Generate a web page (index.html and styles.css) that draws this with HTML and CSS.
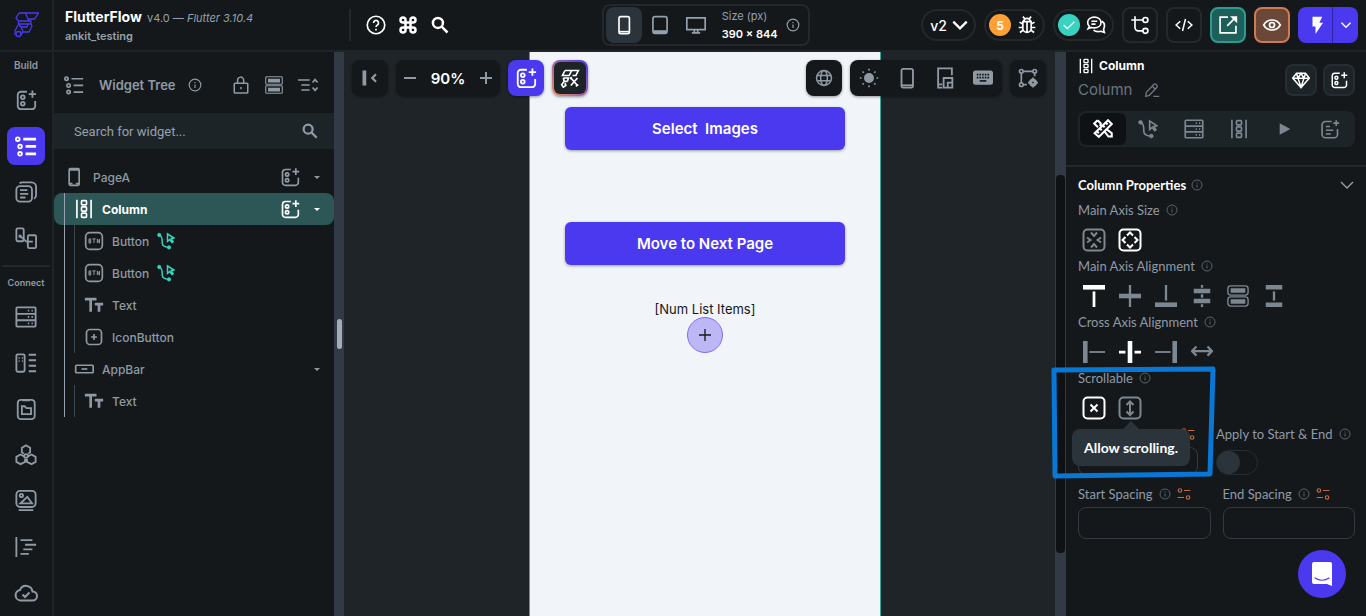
FILE: index.html
```html
<!DOCTYPE html>
<html lang="en">
<head>
    <meta charset="UTF-8">
    <meta name="viewport" content="width=device-width, initial-scale=1.0">
    <title>FlutterFlow - ankit_testing</title>
    <link rel="stylesheet" href="styles.css">
</head>
<body>
    <!-- Shared icons -->
    <svg class="sprite" aria-hidden="true">
        <symbol id="i-logo" viewBox="0 0 26 26"><path d="M6 1h19.500L21.500 7H15L12.500 1M6 1L3 6l2.500 3H15l1-2M5.500 9v3H18V9h-3M5.500 12L8 15h6l1-3M18 12l1 2-3 6h-6L8 15M5 13l-3 6v4M10 20l-3 4"/><circle cx="5.500" cy="22" r="2.500"/></symbol>
        <symbol id="i-add" viewBox="0 0 24 24"><path d="M13 3H6.500A3.500 3.500 0 0 0 3 6.500v12A3.500 3.500 0 0 0 6.500 22h12a3.500 3.500 0 0 0 3.500-3.500V13M19 1.500v8M15 5.500h8"/><circle cx="8.500" cy="9" r="2"/><circle cx="8.500" cy="16" r="2"/></symbol>
        <symbol id="i-tree" viewBox="0 0 24 24"><circle cx="3" cy="4.500" r="2" stroke-width="2"/><circle cx="5.500" cy="12.500" r="2" stroke-width="2"/><circle cx="5.500" cy="20.500" r="2" stroke-width="2"/><path d="M9 4.500h14M11.500 12.500H23M11.500 20.500H23"/></symbol>
        <symbol id="i-pages" viewBox="0 0 24 24"><rect x="1.500" y="5.500" width="17" height="17" rx="4"/><path d="M5 2.500c1-1 2-1 3-1h10a5 5 0 0 1 5 5v9c0 2-1 3-2 4M5.500 10h8M5.500 14h9M5.500 18h6"/></symbol>
        <symbol id="i-flow" viewBox="0 0 24 24"><rect x="1.500" y="1.500" width="8" height="14" rx="1.500"/><rect x="14" y="9" width="9" height="14" rx="1.500"/><path d="M5.500 10l7 6h7"/><circle cx="5.500" cy="10" r=".8"/></symbol>
        <symbol id="i-db" viewBox="0 0 24 24"><rect x="1.500" y="1.500" width="21" height="21" rx="1"/><path d="M1.500 8.500h21M1.500 15.500h21M14 5h1.500M18 5h1.500M14 12h1.500M18 12h1.500M14 19h1.500M18 19h1.500"/></symbol>
        <symbol id="i-types" viewBox="0 0 24 24"><rect x="1.500" y="2.500" width="9" height="19" rx="1.500"/><path d="M4 6.500h1M7.500 6.500h1M4 10h1M7.500 10h1M15 3h8M15 9h8M15 15h8M15 21h8"/></symbol>
        <symbol id="i-files" viewBox="0 0 24 24"><rect x="3" y="2" width="18.500" height="21" rx="3.500"/><path d="M8 2.500h8M7.500 9v8.500h10V11h-5l-2-2z"/></symbol>
        <symbol id="i-api" viewBox="0 0 24 24"><path d="M9.500 10.500L7.500 9V4L12 1.500 16.500 4v5l-2 1.500M10 13.500l-4-2-4.500 2.500v5.500L6 22l5-2.500V16M14 13.500l4-2 4.500 2.500v5.500L18 22l-5-2.500V16"/><circle cx="12" cy="13" r="2"/></symbol>
        <symbol id="i-media" viewBox="0 0 24 24"><rect x="1.500" y="1" width="21" height="17.500" rx="4"/><circle cx="7" cy="6" r="1.800"/><path d="M6 14.500l7.500-7 5 7zM4 22h16"/></symbol>
        <symbol id="i-settings" viewBox="0 0 24 24"><path d="M1.500 1v22M6 4.500h13M11 9.500h12M9 14.500h10M6 19.500h9"/></symbol>
        <symbol id="i-cloud" viewBox="0 0 24 24"><path d="M6.500 19.500a5.300 5.300 0 0 1-.5-10.500 6.500 6.500 0 0 1 12.500 1.500 4.500 4.500 0 0 1 0 9zM8.500 13.500l2.500 2.500 4.500-4.500"/></symbol>
        <symbol id="i-info" viewBox="0 0 24 24"><circle cx="12" cy="12" r="10"/><path d="M12 11v6M12 7v2"/></symbol>
        <symbol id="i-lock" viewBox="0 0 24 24"><rect x="3" y="9.500" width="18" height="13" rx="1"/><path d="M7.500 9.500V6a4 4 0 0 1 8-1v4.500M12 14.500v3"/></symbol>
        <symbol id="i-rows" viewBox="0 0 24 24"><rect x="1" y="1" width="22" height="10" rx="1" stroke-width="1.500"/><rect x="1" y="13" width="22" height="10" rx="1" stroke-width="1.500"/><path d="M4 6h16M4 18h16" stroke-width="5"/></symbol>
        <symbol id="i-collapse" viewBox="0 0 24 24"><path d="M0 6h14M4 12h10M4 18h10M17.500 9l3-3.500 3 3.500M17.500 15l3 3.500 3-3.500"/></symbol>
        <symbol id="i-search" viewBox="0 0 24 24"><circle cx="9.500" cy="9.500" r="6"/><path d="M14 14l7 7"/></symbol>
        <symbol id="i-phone" viewBox="0 0 24 24"><rect x="6" y="2" width="12.500" height="20.500" rx="2"/><path d="M6 20h12.500"/></symbol>
        <symbol id="i-page" viewBox="0 0 24 24"><rect x="5" y="2" width="12" height="20" rx="1.500"/><path d="M5 3.500h12M5 20h4M13 20h4"/></symbol>
        <symbol id="i-column" viewBox="0 0 24 24"><path d="M3.500 1v22M20.500 1v22"/><rect x="9" y="2" width="6" height="5" rx="1"/><rect x="9" y="9.500" width="6" height="5" rx="1"/><rect x="9" y="17" width="6" height="5" rx="1"/></symbol>
        <symbol id="i-btn" viewBox="0 0 24 24"><rect x="2" y="2" width="20" height="20" rx="5"/><path d="M6 9.500v5h2v-5zM6 12h2M10 9.500h4M12 9.500v5M16 14.500v-5l2.500 5v-5" stroke-width="1.200"/></symbol>
        <symbol id="i-action" viewBox="0 0 24 24"><circle cx="3" cy="4" r="2.200" fill="currentColor" stroke-width="1"/><circle cx="16" cy="20.500" r="2.200" fill="currentColor" stroke-width="1"/><path d="M3 4.500c5 1 3.500 6 4 10.500.2 3 2 5 8 5.500M14 2.500v10l3-2.500 3 4 1.500-1-2.500-4 3.500-1z"/></symbol>
        <symbol id="i-text" viewBox="0 0 24 24"><path d="M1 5h14M8 5v15M13 11h10M18 11v9" stroke-width="3.200"/></symbol>
        <symbol id="i-iconbtn" viewBox="0 0 24 24"><rect x="3" y="3" width="18" height="18" rx="4"/><path d="M12 8.500v7M8.500 12h7"/></symbol>
        <symbol id="i-appbar" viewBox="0 0 24 24"><rect x="2" y="7.500" width="21" height="9" rx="1"/><path d="M9 12h7"/></symbol>
        <symbol id="i-help" viewBox="0 0 24 24"><circle cx="12" cy="12" r="10.500"/><path d="M9 9.500a3 3 0 1 1 4.500 2.600c-1 .7-1.500 1.200-1.500 2.400M12 16.500v2"/></symbol>
        <symbol id="i-cmd" viewBox="0 0 24 24"><path d="M9 9h6v6H9zM9 9H6a3 3 0 1 1 3-3zM15 9V6a3 3 0 1 1 3 3zM15 15h3a3 3 0 1 1-3 3zM9 15v3a3 3 0 1 1-3-3z"/></symbol>
        <symbol id="i-tablet" viewBox="0 0 24 24"><rect x="3.500" y="2" width="17" height="20" rx="2.500"/><path d="M4 20h16" stroke-width="3.500"/></symbol>
        <symbol id="i-desktop" viewBox="0 0 24 24"><path d="M1 3.500h22v14H1zM10 18v3M14 18v3M7 21.500h10"/></symbol>
        <symbol id="i-chevron" viewBox="0 0 24 24"><path d="M3 7.500l9 9 9-9"/></symbol>
        <symbol id="i-bug" viewBox="0 0 24 24"><path d="M7 8h10v8a5 5 0 0 1-10 0zM8 8a4 4 0 0 1 8 0M12 8v13M9 4L7 2M15 4l2-2M7 11L3 8.500M7 15H2M7.500 18L3.500 21M17 11l4-2.500M17 15h5M16.500 18l4 3"/></symbol>
        <symbol id="i-comment" viewBox="0 0 24 24"><path d="M2.500 16.500L4 13.500A6 6 0 0 1 2 9c0-4 3.500-6.500 8-6.500S18 5 18 9s-3.500 6.500-8 6.500c-1.500 0-2.500-.2-3.500-.5zM19 7.500c3 1.500 3.500 4 3 6.500-.2 1.500-.5 2.500-1 3.500l1 3.500-4-1.500c-4 1-7 .5-9-1.500M6.500 7.500h7M6.500 11h5"/></symbol>
        <symbol id="i-branch" viewBox="0 0 24 24"><path d="M1.500 6h14M6 1.500V15a4 4 0 0 0 4 4h5.500"/><circle cx="18.500" cy="6" r="3"/><circle cx="18.500" cy="19" r="3"/></symbol>
        <symbol id="i-code" viewBox="0 0 24 24"><path d="M7 7l-5.500 5L7 17M17 7l5.500 5-5.500 5M14 4l-4 16"/></symbol>
        <symbol id="i-open" viewBox="0 0 24 24"><path d="M12 2.500H2.500v19H21.500V13M11 13l9-9"/><path d="M14.500 1.500H23V10z" fill="currentColor" stroke="none"/></symbol>
        <symbol id="i-eye" viewBox="0 0 24 24"><path d="M2 12c4.500-8 15.500-8 20 0-4.500 8-15.500 8-20 0z"/><circle cx="12" cy="12" r="3"/></symbol>
        <symbol id="i-bolt" viewBox="0 0 24 24"><path d="M6 1h13l-4 8h5L10 24V14H6z" fill="currentColor" stroke="none"/></symbol>
        <symbol id="i-side" viewBox="0 0 24 24"><path d="M4.500 2v20" stroke-width="5"/><path d="M20 7l-5 5 5 5"/></symbol>
        <symbol id="i-minus" viewBox="0 0 24 24"><path d="M3 12h18"/></symbol>
        <symbol id="i-plus" viewBox="0 0 24 24"><path d="M3 12h18M12 3v18"/></symbol>
        <symbol id="i-flowx" viewBox="0 0 24 24"><path d="M6 3h16l-3 6h-4M6 3L3 9h8l3-6M4 12h6l-1 4M4 12l1 4h4M5 16l-3 4 2 3 3-2-1-3M13 12l8 9M21 12l-8 9M12 13l2-2M19 22l3-2"/></symbol>
        <symbol id="i-globe" viewBox="0 0 24 24"><circle cx="12" cy="12" r="10"/><ellipse cx="12" cy="12" rx="4.500" ry="10"/><path d="M3 8.500h18M3 15.500h18"/></symbol>
        <symbol id="i-sun" viewBox="0 0 24 24"><circle cx="12" cy="12" r="5" fill="currentColor"/><path d="M12 1v2M12 21v2M1 12h2M21 12h2M4.200 4.200l1.500 1.500M18.300 18.300l1.500 1.500M4.200 19.800l1.500-1.500M18.300 5.700l1.500-1.500"/></symbol>
        <symbol id="i-multi" viewBox="0 0 24 24"><path d="M9 22.500H4.500v-21h15V9M10.500 22.500V12H20v10.500zM15 22v-5h5M9 19H5"/></symbol>
        <symbol id="i-keyboard" viewBox="0 0 24 24"><rect x="1" y="4" width="22" height="15" rx="2" fill="currentColor"/><path d="M4.500 8h15M4.500 11.500h15" stroke="#14181b" stroke-dasharray="2 1.200"/><path d="M8 15.500h8" stroke="#14181b"/></symbol>
        <symbol id="i-bounds" viewBox="0 0 24 24"><circle cx="4" cy="4" r="2.200"/><circle cx="20" cy="4" r="2.200"/><circle cx="4" cy="20" r="2.200"/><path d="M6.500 4h11M4 6.500v11M6.500 20h4M20 6.500V10"/><circle cx="18" cy="17.500" r="3" stroke-width="4"/><path d="M18 11.500v2M18 21.500v2M12 17.500h2M22 17.500h2"/></symbol>
        <symbol id="i-gem" viewBox="0 0 24 24"><path d="M6 3h12l5 6.500L12 22 1 9.500zM1.500 9.500h21M8 9.500l4 12 4-12M6 3l2 6.500L12 3l4 6.500L18 3"/></symbol>
        <symbol id="i-pencil" viewBox="0 0 24 24"><path d="M2.500 21.500l1-6L15 3.500c2-2 6.500 2 4.500 4.500L8 20zM12.500 6.500l4.500 4.500M14 21.500h9"/></symbol>
        <symbol id="i-design" viewBox="0 0 24 24"><path d="M5.500 1.500L10 6M14 15l4.500 6h4v-4l-6-4.500M5.500 1.500l-4 4L6 10M10 6L8 8M18 1.500L22.500 6 7 21.500 2 17zM15.500 4.500l2 2M12 8l2 2M8.500 11.500l2 2M5 15l2 2" stroke-width="2.500"/></symbol>
        <symbol id="i-play" viewBox="0 0 24 24"><path d="M4 3.500l16 8.500-16 8.500z" fill="currentColor" stroke="none"/></symbol>
        <symbol id="i-note" viewBox="0 0 24 24"><path d="M14 3H6.500A4 4 0 0 0 2.500 7v11.500a4 4 0 0 0 4 4H17a4 4 0 0 0 4-4V12M19.500 1.500v7M16 5h7M7 9h5M7 13.500h9M7 18h6"/></symbol>
        <symbol id="i-min" viewBox="0 0 24 24"><rect x="1.500" y="1.500" width="21" height="21" rx="4"/><path d="M9 4.500l3 3.500 3-3.500M9 19.500l3-3.500 3 3.500M5 9.500L8.500 12 5 14.500M19 9.500L15.500 12l3.500 2.500"/></symbol>
        <symbol id="i-max" viewBox="0 0 24 24"><rect x="1.500" y="1.500" width="21" height="21" rx="4"/><path d="M9 7.500L12 4.500l3 3M9 16.500l3 3 3-3M7.500 9l-3 3 3 3M16.500 9l3 3-3 3"/></symbol>
        <symbol id="i-m-start" viewBox="0 0 24 24"><path d="M0 2.500h24" stroke-width="5"/><path d="M12 7v17" stroke-width="3"/></symbol>
        <symbol id="i-m-center" viewBox="0 0 24 24"><path d="M0 12h24" stroke-width="5"/><path d="M12 0v24" stroke-width="2.500"/></symbol>
        <symbol id="i-m-end" viewBox="0 0 24 24"><path d="M0 21.500h24" stroke-width="5"/><path d="M12 0v17" stroke-width="2.500"/></symbol>
        <symbol id="i-m-between" viewBox="0 0 24 24"><path d="M3 6.500h18M3 17.500h18" stroke-width="5"/><path d="M12 0v3M12 10v4M12 21v3" stroke-width="2.500"/></symbol>
        <symbol id="i-m-around" viewBox="0 0 24 24"><rect x="1" y="1" width="22" height="10" rx="3" stroke-width="1.500"/><rect x="1" y="13" width="22" height="10" rx="3" stroke-width="1.500"/><path d="M4 6h16M4 18h16" stroke-width="5"/></symbol>
        <symbol id="i-m-even" viewBox="0 0 24 24"><path d="M3 2.500h18M3 21.500h18" stroke-width="5"/><path d="M12 7v10" stroke-width="2.500"/></symbol>
        <symbol id="i-c-start" viewBox="0 0 24 24"><path d="M2.500 0v24" stroke-width="5"/><path d="M7 12h17"/></symbol>
        <symbol id="i-c-center" viewBox="0 0 24 24"><path d="M12 0v24" stroke-width="5"/><path d="M0 12h7M17 12h7" stroke-width="3"/></symbol>
        <symbol id="i-c-end" viewBox="0 0 24 24"><path d="M21.500 0v24" stroke-width="5"/><path d="M0 12h17"/></symbol>
        <symbol id="i-c-stretch" viewBox="0 0 24 24"><path d="M1.500 11h21M6 6l-5 5 5 5M18 6l5 5-5 5" stroke-width="2.500"/></symbol>
        <symbol id="i-noscroll" viewBox="0 0 24 24"><rect x="1.500" y="1.500" width="21" height="21" rx="4"/><path d="M8.500 8.500l7 7M15.500 8.500l-7 7"/></symbol>
        <symbol id="i-scroll" viewBox="0 0 24 24"><rect x="1.500" y="1.500" width="21" height="21" rx="4"/><path d="M12 5.500v13M8.500 9L12 5.500 15.500 9M8.500 15.500l3.500 3.500 3.500-3.500"/></symbol>
        <symbol id="i-var" viewBox="0 0 24 24"><circle cx="5" cy="6" r="3"/><circle cx="19" cy="18" r="3"/><path d="M12 6h11M1 18h11"/></symbol>
    </svg>

    <header class="header">
        <a class="logo" href="#" aria-label="FlutterFlow home"><svg class="icon s26"><use href="#i-logo"/></svg></a>
        <div class="brand">
            <div class="brand-line"><strong>FlutterFlow</strong> <span>v4.0 — <em>Flutter 3.10.4</em></span></div>
            <div class="project">ankit_testing</div>
        </div>
        <div class="tools">
            <button aria-label="Help"><svg class="icon s20"><use href="#i-help"/></svg></button>
            <button aria-label="Shortcuts"><svg class="icon s20 bold"><use href="#i-cmd"/></svg></button>
            <button aria-label="Search"><svg class="icon s20 bold"><use href="#i-search"/></svg></button>
        </div>
        <div class="devices">
            <button class="active" aria-label="Phone"><svg class="icon s20"><use href="#i-phone"/></svg></button>
            <button aria-label="Tablet"><svg class="icon s20"><use href="#i-tablet"/></svg></button>
            <button aria-label="Desktop"><svg class="icon s20"><use href="#i-desktop"/></svg></button>
            <div class="size"><span>Size (px)</span><b>390 × 844</b></div>
            <svg class="icon s14 muted"><use href="#i-info"/></svg>
        </div>
        <div class="actions">
            <button class="pill version">v2 <svg class="icon s18 bold"><use href="#i-chevron"/></svg></button>
            <button class="pill" aria-label="5 issues"><span class="count">5</span><svg class="icon s20"><use href="#i-bug"/></svg></button>
            <button class="pill" aria-label="Comments"><span class="check"><svg class="icon s16" viewBox="0 0 24 24"><path d="M4 12l5.500 5.500L20 7"/></svg></span><svg class="icon s20"><use href="#i-comment"/></svg></button>
            <button class="square" aria-label="Branches"><svg class="icon s20"><use href="#i-branch"/></svg></button>
            <button class="square" aria-label="Code"><svg class="icon s18"><use href="#i-code"/></svg></button>
            <button class="square share" aria-label="Open"><svg class="icon s20"><use href="#i-open"/></svg></button>
            <button class="square preview" aria-label="Preview"><svg class="icon s20"><use href="#i-eye"/></svg></button>
            <div class="run">
                <button aria-label="Run"><svg class="icon s18"><use href="#i-bolt"/></svg></button>
                <button aria-label="Run options"><svg class="icon s12 bold"><use href="#i-chevron"/></svg></button>
            </div>
        </div>
    </header>

    <div class="workspace">
        <nav class="rail">
            <h2>Build</h2>
            <a href="#" aria-label="Add widget"><svg class="icon s22"><use href="#i-add"/></svg></a>
            <a href="#" class="active" aria-label="Widget tree"><svg class="icon s22 bold"><use href="#i-tree"/></svg></a>
            <a href="#" aria-label="Pages"><svg class="icon s22"><use href="#i-pages"/></svg></a>
            <a href="#" aria-label="Storyboard"><svg class="icon s22"><use href="#i-flow"/></svg></a>
            <h2 class="split">Connect</h2>
            <a href="#" aria-label="Firestore"><svg class="icon s22"><use href="#i-db"/></svg></a>
            <a href="#" aria-label="Data types"><svg class="icon s22"><use href="#i-types"/></svg></a>
            <a href="#" aria-label="App state"><svg class="icon s22"><use href="#i-files"/></svg></a>
            <a href="#" aria-label="API calls"><svg class="icon s22"><use href="#i-api"/></svg></a>
            <a href="#" aria-label="Media"><svg class="icon s22"><use href="#i-media"/></svg></a>
            <a href="#" aria-label="Settings"><svg class="icon s22"><use href="#i-settings"/></svg></a>
            <a href="#" aria-label="Deploy"><svg class="icon s24"><use href="#i-cloud"/></svg></a>
        </nav>

        <aside class="tree">
            <div class="tree-head">
                <svg class="icon s20"><use href="#i-tree"/></svg>
                <h1>Widget Tree</h1>
                <svg class="icon s14"><use href="#i-info"/></svg>
                <div class="tree-tools">
                    <button aria-label="Lock"><svg class="icon s18"><use href="#i-lock"/></svg></button>
                    <button aria-label="Row height"><svg class="icon s18"><use href="#i-rows"/></svg></button>
                    <button aria-label="Collapse"><svg class="icon s20"><use href="#i-collapse"/></svg></button>
                </div>
            </div>
            <div class="search">
                <input type="text" aria-label="Search for widget" placeholder="Search for widget...">
                <button aria-label="Search"><svg class="icon s18 bold"><use href="#i-search"/></svg></button>
            </div>
            <ul class="nodes">
                <li>
                    <div class="node l0"><svg class="icon s20"><use href="#i-page"/></svg><span>PageA</span><button class="add" aria-label="Add child"><svg class="icon s20"><use href="#i-add"/></svg></button><button class="caret" aria-label="Toggle"></button></div>
                    <ul class="guide">
                        <li>
                            <div class="node l1 selected"><svg class="icon s20"><use href="#i-column"/></svg><span>Column</span><button class="add" aria-label="Add child"><svg class="icon s20"><use href="#i-add"/></svg></button><button class="caret" aria-label="Toggle"></button></div>
                            <ul class="guide inner">
                                <li class="node l2"><svg class="icon s20"><use href="#i-btn"/></svg><span>Button</span><svg class="icon s18 teal"><use href="#i-action"/></svg></li>
                                <li class="node l2"><svg class="icon s20"><use href="#i-btn"/></svg><span>Button</span><svg class="icon s18 teal"><use href="#i-action"/></svg></li>
                                <li class="node l2"><svg class="icon s20"><use href="#i-text"/></svg><span>Text</span></li>
                                <li class="node l2"><svg class="icon s20"><use href="#i-iconbtn"/></svg><span>IconButton</span></li>
                            </ul>
                        </li>
                        <li>
                            <div class="node l1"><svg class="icon s20"><use href="#i-appbar"/></svg><span>AppBar</span><button class="caret" aria-label="Toggle"></button></div>
                            <ul class="guide inner">
                                <li class="node l2"><svg class="icon s20"><use href="#i-text"/></svg><span>Text</span></li>
                            </ul>
                        </li>
                    </ul>
                </li>
            </ul>
        </aside>
        <div class="gutter"><span></span></div>

        <main class="canvas">
            <div class="toolbar">
                <button class="tool" aria-label="Hide panel"><svg class="icon s18 bold"><use href="#i-side"/></svg></button>
                <div class="tool zoom">
                    <button aria-label="Zoom out"><svg class="icon s16 bold"><use href="#i-minus"/></svg></button>
                    <b>90%</b>
                    <button aria-label="Zoom in"><svg class="icon s16 bold"><use href="#i-plus"/></svg></button>
                </div>
                <button class="tool primary" aria-label="Add widget"><svg class="icon s22"><use href="#i-add"/></svg></button>
                <button class="tool ai" aria-label="AI generate"><svg class="icon s20"><use href="#i-flowx"/></svg></button>
                <button class="tool push" aria-label="Language"><svg class="icon s18"><use href="#i-globe"/></svg></button>
                <div class="tool group">
                    <button aria-label="Light mode"><svg class="icon s20"><use href="#i-sun"/></svg></button>
                    <button aria-label="Device frame"><svg class="icon s22"><use href="#i-phone"/></svg></button>
                    <button aria-label="Multiple devices"><svg class="icon s22"><use href="#i-multi"/></svg></button>
                    <button aria-label="Keyboard"><svg class="icon s20"><use href="#i-keyboard"/></svg></button>
                </div>
                <button class="tool" aria-label="Canvas settings"><svg class="icon s20"><use href="#i-bounds"/></svg></button>
            </div>
            <div class="phone">
                <button class="app-button">Select&nbsp; Images</button>
                <button class="app-button">Move to Next Page</button>
                <p>[Num List Items]</p>
                <button class="app-add" aria-label="Add item"><svg class="icon s16"><use href="#i-plus"/></svg></button>
            </div>
            <div class="scrollbar"><span></span></div>
        </main>

        <aside class="props">
            <div class="props-head">
                <div class="props-name">
                    <div class="type"><svg class="icon s16"><use href="#i-column"/></svg>Column</div>
                    <div class="alias">Column <svg class="icon s16"><use href="#i-pencil"/></svg></div>
                </div>
                <button aria-label="Theme"><svg class="icon s18"><use href="#i-gem"/></svg></button>
                <button aria-label="Wrap widget"><svg class="icon s18"><use href="#i-add"/></svg></button>
            </div>
            <div class="tabs">
                <button class="active" aria-label="Properties"><svg class="icon s20"><use href="#i-design"/></svg></button>
                <button aria-label="Actions"><svg class="icon s20"><use href="#i-action"/></svg></button>
                <button aria-label="Backend"><svg class="icon s20"><use href="#i-db"/></svg></button>
                <button aria-label="Children"><svg class="icon s20"><use href="#i-column"/></svg></button>
                <button aria-label="Animations"><svg class="icon s16"><use href="#i-play"/></svg></button>
                <button aria-label="Notes"><svg class="icon s20"><use href="#i-note"/></svg></button>
            </div>

            <section class="fields">
                <h2>Column Properties <svg class="icon s12 dim"><use href="#i-info"/></svg><svg class="icon s16 open"><use href="#i-chevron"/></svg></h2>
                <div class="field">
                    <div class="label">Main Axis Size <svg class="icon s12 dim"><use href="#i-info"/></svg></div>
                    <div class="options">
                        <button aria-label="Min"><svg class="icon s24"><use href="#i-min"/></svg></button>
                        <button class="on" aria-label="Max"><svg class="icon s24"><use href="#i-max"/></svg></button>
                    </div>
                </div>
                <div class="field">
                    <div class="label">Main Axis Alignment <svg class="icon s12 dim"><use href="#i-info"/></svg></div>
                    <div class="options">
                        <button class="on" aria-label="Start"><svg class="icon s22"><use href="#i-m-start"/></svg></button>
                        <button aria-label="Center"><svg class="icon s22"><use href="#i-m-center"/></svg></button>
                        <button aria-label="End"><svg class="icon s22"><use href="#i-m-end"/></svg></button>
                        <button aria-label="Space evenly"><svg class="icon s22"><use href="#i-m-between"/></svg></button>
                        <button aria-label="Space around"><svg class="icon s22"><use href="#i-m-around"/></svg></button>
                        <button aria-label="Space between"><svg class="icon s22"><use href="#i-m-even"/></svg></button>
                    </div>
                </div>
                <div class="field">
                    <div class="label">Cross Axis Alignment <svg class="icon s12 dim"><use href="#i-info"/></svg></div>
                    <div class="options">
                        <button aria-label="Start"><svg class="icon s22"><use href="#i-c-start"/></svg></button>
                        <button class="on" aria-label="Center"><svg class="icon s22"><use href="#i-c-center"/></svg></button>
                        <button aria-label="End"><svg class="icon s22"><use href="#i-c-end"/></svg></button>
                        <button aria-label="Stretch"><svg class="icon s22"><use href="#i-c-stretch"/></svg></button>
                    </div>
                </div>
                <div class="field scrollable">
                    <div class="label">Scrollable <svg class="icon s12 dim"><use href="#i-info"/></svg></div>
                    <div class="options">
                        <button class="on" aria-label="Not scrollable"><svg class="icon s24"><use href="#i-noscroll"/></svg></button>
                        <button aria-label="Scrollable" aria-describedby="scroll-tip"><svg class="icon s24"><use href="#i-scroll"/></svg></button>
                    </div>
                    <div class="tooltip" id="scroll-tip" role="tooltip">Allow scrolling.</div>
                    <svg class="callout" viewBox="0 0 166 116" aria-hidden="true"><path d="M4 5L163 4L160 109L5 111Z"/></svg>
                </div>
                <div class="spacing-row">
                    <div class="items">
                        <label class="label" for="items-spacing"><svg class="icon s14 orange"><use href="#i-var"/></svg></label>
                        <input type="text" id="items-spacing" aria-label="Items spacing">
                    </div>
                    <div class="apply">
                        <label class="label" for="apply">Apply to Start &amp; End <svg class="icon s12 dim"><use href="#i-info"/></svg></label>
                        <input type="checkbox" class="switch" id="apply">
                    </div>
                </div>
                <div class="spacing-pair">
                    <div>
                        <label class="label" for="start-spacing">Start Spacing <svg class="icon s12 dim"><use href="#i-info"/></svg><svg class="icon s14 orange"><use href="#i-var"/></svg></label>
                        <input type="text" id="start-spacing">
                    </div>
                    <div>
                        <label class="label" for="end-spacing">End Spacing <svg class="icon s12 dim"><use href="#i-info"/></svg><svg class="icon s14 orange"><use href="#i-var"/></svg></label>
                        <input type="text" id="end-spacing">
                    </div>
                </div>
            </section>
        </aside>
    </div>

    <button class="chat" aria-label="Open chat">
        <svg viewBox="0 0 24 28"><path d="M4 2h16a2 2 0 0 1 2 2v22l-5-2H4a2 2 0 0 1-2-2V4a2 2 0 0 1 2-2z" fill="#fff"/><path d="M5 18c4 3 10 3 14 0" fill="none" stroke="#4b39ef" stroke-width="1.200" stroke-linecap="round"/></svg>
    </button>
</body>
</html>
```
FILE: styles.css
```css
* {
    box-sizing: border-box;
}
body {
    margin: 0;
    height: 100vh;
    display: flex;
    flex-direction: column;
    overflow: hidden;
    background: #14181b;
    color: #8f9aa5;
    font-family: Inter, "Liberation Sans", sans-serif;
    font-size: 12px;
}
h1, h2, p, ul {
    margin: 0;
    padding: 0;
}
ul {
    list-style: none;
}
button {
    display: flex;
    align-items: center;
    justify-content: center;
    padding: 0;
    border: none;
    background: none;
    color: inherit;
    font: inherit;
    cursor: pointer;
}
a {
    color: inherit;
}

/* icons */
.sprite {
    position: absolute;
    width: 0;
    height: 0;
}
.icon {
    flex: none;
    fill: none;
    stroke: currentColor;
    stroke-width: 2;
}
.bold { stroke-width: 3; }
.s12 { width: 12px; height: 12px; }
.s14 { width: 14px; height: 14px; }
.s16 { width: 16px; height: 16px; }
.s18 { width: 18px; height: 18px; }
.s20 { width: 20px; height: 20px; }
.s22 { width: 22px; height: 22px; }
.s24 { width: 24px; height: 24px; }
.s26 { width: 26px; height: 26px; }
.muted { color: #95a1ac; }
.dim { color: #57636c; }
.teal { color: #39d2c0; }
.orange { color: #c46a43; }

/* header */
.header {
    flex: none;
    display: flex;
    align-items: center;
    height: 52px;
    padding-right: 8px;
    border-bottom: 2px solid #1f2428;
    color: #fff;
}
.logo {
    width: 54px;
    height: 50px;
    display: flex;
    align-items: center;
    justify-content: center;
    border-right: 2px solid #1f2428;
    color: #4b39ef;
}
.logo .icon {
    stroke-width: 1.3;
}
.brand {
    width: 297px;
    height: 32px;
    padding-left: 11px;
    border-right: 2px solid #22282c;
    color: #95a1ac;
}
.brand-line {
    font-size: 11px;
    line-height: 16px;
}
.brand strong {
    margin-right: 2px;
    color: #fff;
    font-size: 14px;
    font-weight: 700;
}
.project {
    font-size: 11px;
    font-weight: 600;
    line-height: 20px;
}
.tools {
    display: flex;
    gap: 12px;
    margin-left: 15px;
    margin-right: 40px;
}
.devices {
    display: flex;
    align-items: center;
    height: 42px;
    margin: 0 auto;
    padding: 0 8px 0 2px;
    border: 2px solid #22282c;
    border-radius: 8px;
    color: #95a1ac;
}
.devices button {
    width: 36px;
    height: 36px;
    border-radius: 8px;
}
.devices button.active {
    background: #2b343b;
    color: #fff;
}
.size {
    display: flex;
    flex-direction: column;
    margin: 0 8px;
    font-size: 11px;
    line-height: 18px;
}
.size b {
    color: #fff;
    font-weight: 600;
}
.actions {
    display: flex;
    align-items: center;
    gap: 8px;
}
.pill {
    gap: 6px;
    height: 32px;
    padding: 0 6px 0 3px;
    border: 2px solid #22282c;
    border-radius: 16px;
}
.version {
    gap: 4px;
    padding: 0 5px 0 7px;
    font-size: 14px;
    font-weight: 500;
}
.count, .check {
    display: flex;
    align-items: center;
    justify-content: center;
    width: 22px;
    height: 22px;
    border-radius: 50%;
    background: #ff9f36;
    font-weight: 700;
}
.check {
    background: #39d2c0;
}
.square {
    width: 36px;
    height: 36px;
    border: 2px solid #22282c;
    border-radius: 8px;
}
.share {
    background: #1e5f59;
    border-color: #2a9d90;
}
.preview {
    background: #6b4738;
    border-color: #d07a52;
}
.run {
    display: flex;
    height: 36px;
    border-radius: 8px;
    background: #4b39ef;
}
.run button {
    width: 25px;
}
.run button:first-child {
    width: 35px;
    padding-left: 4px;
    border-right: 1px solid #3025a8;
}

/* left rail */
.workspace {
    flex: 1;
    display: flex;
    min-height: 0;
}
.rail {
    flex: none;
    display: flex;
    flex-direction: column;
    align-items: center;
    gap: 8px;
    width: 54px;
    padding-top: 6px;
    border-right: 2px solid #1f2428;
}
.rail h2 {
    font-size: 10px;
    font-weight: 600;
    line-height: 15px;
}
.rail .split {
    width: 48px;
    padding-top: 8px;
    border-top: 2px solid #22282c;
    text-align: center;
    white-space: nowrap;
    font-size: 9px;
}
.rail a {
    display: flex;
    align-items: center;
    justify-content: center;
    width: 38px;
    height: 38px;
    border-radius: 8px;
}
.rail .active {
    background: #4b39ef;
    color: #fff;
}

/* widget tree */
.tree {
    flex: none;
    width: 280px;
}
.tree-head {
    display: flex;
    align-items: center;
    height: 61px;
    padding: 4px 16px 0 10px;
}
.tree-head h1 {
    margin: 0 12px 0 15px;
    font-size: 13px;
    font-weight: 600;
}
.tree-tools {
    display: flex;
    gap: 15px;
    margin-left: auto;
}
.search {
    display: flex;
    align-items: center;
    height: 36px;
    padding: 0 15px 0 20px;
    background: #1d2428;
}
.search input {
    flex: 1;
    min-width: 0;
    padding: 0;
    border: none;
    outline: none;
    background: none;
    color: #95a1ac;
    font-family: Roboto, sans-serif;
    font-size: 13px;
}
.search input::placeholder {
    color: #95a1ac;
}
.nodes {
    padding-top: 12px;
    font-weight: 500;
}
.guide {
    position: relative;
}
.guide::before {
    content: "";
    position: absolute;
    top: 0;
    bottom: 0;
    left: 10px;
    width: 1px;
    background: #95a1ac;
}
.guide.inner::before {
    left: 20px;
    background: #3c464e;
}
.node {
    display: flex;
    align-items: center;
    gap: 8px;
    height: 32px;
    padding-right: 12px;
}
.l0 { padding-left: 11px; }
.l1 { padding-left: 20px; }
.l2 { padding-left: 30px; }
.selected {
    border-radius: 8px;
    background: #2d5757;
    color: #fff;
    font-weight: 700;
}
.caret, .add {
    margin-left: auto;
}
.add + .caret {
    margin-left: 4px;
}
.caret {
    width: 10px;
    height: 10px;
}
.caret::before {
    content: "";
    border: 3px solid transparent;
    border-top-color: currentColor;
    border-bottom: none;
}
.gutter {
    flex: none;
    display: flex;
    align-items: center;
    justify-content: center;
    width: 10px;
    background: #323b45;
}
.gutter span {
    width: 5px;
    height: 30px;
    border-radius: 3px;
    background: #a3adba;
}

/* canvas */
.canvas {
    flex: 1;
    position: relative;
    display: flex;
    justify-content: center;
    background: #1f2428;
}
.toolbar {
    position: absolute;
    top: 8px;
    left: 8px;
    right: 20px;
    display: flex;
    gap: 8px;
}
.tool {
    min-width: 36px;
    height: 36px;
    border-radius: 8px;
    background: #14181b;
    box-shadow: 0 1px 3px rgba(0, 0, 0, 0.4);
}
.zoom {
    display: flex;
    align-items: center;
    justify-content: space-between;
    width: 104px;
    padding: 0 6px;
}
.zoom b {
    color: #fff;
    font-size: 15px;
    font-weight: 600;
}
.primary {
    background: #4b39ef;
    color: #fff;
}
.ai {
    border: 2px solid transparent;
    background: linear-gradient(#1d2428, #1d2428) padding-box, linear-gradient(45deg, #ee8b60, #4b39ef) border-box;
    color: #fff;
}
.push {
    margin-left: auto;
}
.group {
    display: flex;
    align-items: center;
    justify-content: space-between;
    width: 152px;
    padding: 0 9px;
}
.phone {
    display: flex;
    flex-direction: column;
    align-items: center;
    width: 352px;
    padding: 55px 35px 0;
    border: 1px solid #3fa596;
    border-width: 0 1px;
    background: #f1f4f8;
    color: #14181b;
}
.app-button {
    width: 100%;
    height: 43px;
    margin-bottom: 72px;
    border-radius: 6px;
    background: #4b39ef;
    box-shadow: 0 1px 3px rgba(20, 24, 27, 0.4);
    color: #fff;
    font-size: 15px;
    font-weight: 600;
}
.app-button + p {
    margin-top: -36px;
    font-size: 13px;
    line-height: 16px;
}
.app-add {
    width: 36px;
    height: 36px;
    border: 1px solid #7d70f3;
    border-radius: 50%;
    background: #bdb7f5;
}
.scrollbar {
    position: absolute;
    top: 0;
    right: 0;
    bottom: 0;
    width: 11px;
    padding: 123px 1px 63px;
    background: #323b45;
}
.scrollbar span {
    display: block;
    height: 100%;
    border-radius: 4px;
    background: #0f1214;
}

/* properties panel */
.props {
    flex: none;
    width: 300px;
    font-family: Lato, Roboto, sans-serif;
    font-size: 13px;
}
.props-head {
    display: flex;
    align-items: center;
    gap: 6px;
    padding: 4px 11px 0 12px;
}
.props-name {
    flex: 1;
    font-family: Inter, sans-serif;
}
.type {
    display: flex;
    align-items: center;
    gap: 5px;
    color: #fff;
    font-size: 12px;
    font-weight: 700;
    line-height: 20px;
}
.alias {
    display: flex;
    align-items: center;
    gap: 12px;
    color: #6b7680;
    font-size: 15px;
    line-height: 28px;
}
.props-head button {
    width: 32px;
    height: 32px;
    border: 2px solid #262d34;
    border-radius: 8px;
    background: #1d2428;
    color: #fff;
}
.tabs {
    display: flex;
    height: 36px;
    margin: 7px 11px 18px 12px;
    padding: 2px;
    border-radius: 8px;
    background: #1d2428;
    color: #7c8791;
}
.tabs button {
    flex: 1;
    border-radius: 6px;
}
.tabs .active {
    background: #0f1214;
    color: #fff;
}
.fields {
    padding: 9px 11px 0 12px;
    border-top: 2px solid #22282c;
}
.fields h2 {
    display: flex;
    align-items: center;
    gap: 5px;
    margin-bottom: 7px;
    color: #fff;
    font-size: 13px;
    font-weight: 700;
    line-height: 18px;
}
.fields .open {
    margin-left: auto;
    color: #95a1ac;
}
.field {
    margin-bottom: 3px;
}
.label {
    display: flex;
    align-items: center;
    gap: 6px;
    line-height: 18px;
    white-space: nowrap;
}
.options {
    display: flex;
    gap: 4px;
    margin-top: 7px;
    color: #7c8791;
}
.options button {
    width: 32px;
    height: 28px;
}
.options .on {
    color: #fff;
}
.scrollable {
    position: relative;
}
.tooltip {
    position: absolute;
    top: 60px;
    left: -6px;
    z-index: 1;
    padding: 9px 12px;
    border-radius: 8px;
    background: #2b343b;
    color: #fff;
    font-size: 14px;
    font-weight: 700;
    line-height: 19px;
    white-space: nowrap;
}
.tooltip::before {
    content: "";
    position: absolute;
    top: -8px;
    left: 50%;
    margin-left: -9px;
    border: 9px solid transparent;
    border-top: none;
    border-bottom-color: #2b343b;
}
.callout {
    position: absolute;
    top: -4px;
    left: -28px;
    z-index: 2;
    width: 166px;
    height: 116px;
    fill: none;
    stroke: #0878d4;
    stroke-width: 5;
    stroke-linejoin: round;
    pointer-events: none;
}
.fields input[type="text"] {
    display: block;
    width: 100%;
    height: 32px;
    margin-top: 4px;
    padding: 0 8px;
    border: 1px solid #323b45;
    border-radius: 8px;
    background: none;
    color: #fff;
}
.spacing-row {
    display: flex;
    gap: 18px;
    margin-bottom: 7px;
}
.items {
    width: 120px;
}
.items .label {
    height: 18px;
    justify-content: flex-end;
    padding-right: 3px;
}
.fields .items input {
    height: 28px;
}
.switch {
    appearance: none;
    width: 42px;
    height: 25px;
    margin: 7px 0 0;
    padding: 0;
    border: 1px solid #262d34;
    border-radius: 13px;
}
.switch::before {
    content: "";
    display: block;
    width: 23px;
    height: 23px;
    border-radius: 50%;
    background: #2b343b;
}
.spacing-pair {
    display: grid;
    grid-template-columns: 1fr 1fr;
    gap: 12px;
}

.chat {
    position: fixed;
    right: 20px;
    bottom: 18px;
    width: 48px;
    height: 48px;
    border-radius: 50%;
    background: #4b39ef;
}
.chat svg {
    width: 24px;
    height: 28px;
}
```
